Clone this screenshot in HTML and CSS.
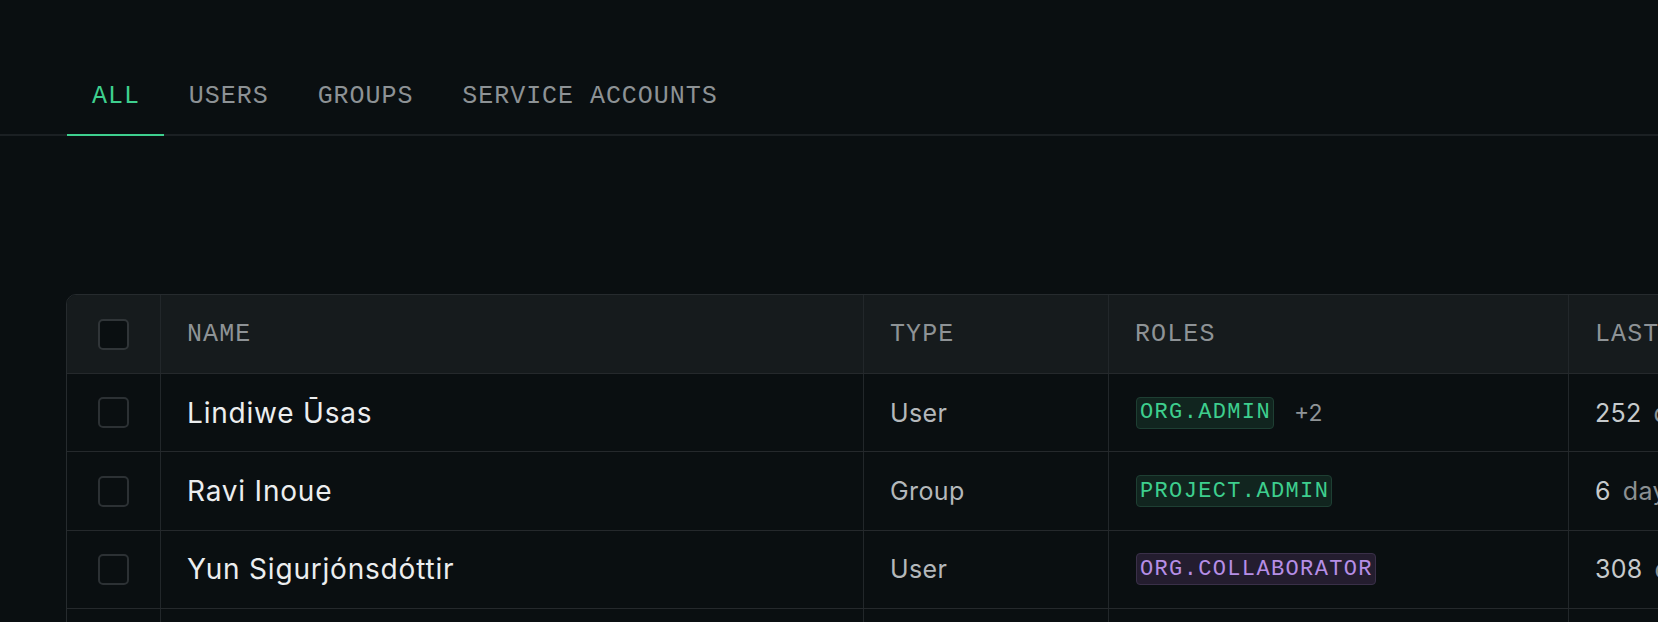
FILE: index.html
```html
<!DOCTYPE html>
<html lang="en">
<head>
<meta charset="utf-8">
<title>Members</title>
<link rel="stylesheet" href="styles.css">
</head>
<body>
<main class="page">
  <nav class="tabs">
    <a class="tab tab--active" href="#">ALL</a>
    <a class="tab" href="#">USERS</a>
    <a class="tab" href="#">GROUPS</a>
    <a class="tab" href="#">SERVICE ACCOUNTS</a>
  </nav>

  <section class="table">
    <div class="row row--head">
      <div class="cell cell--check"><span class="checkbox checkbox--head"></span></div>
      <div class="cell label">NAME</div>
      <div class="cell label">TYPE</div>
      <div class="cell label">ROLES</div>
      <div class="cell label">LAST ACTIVE</div>
    </div>

    <div class="row">
      <div class="cell cell--check"><span class="checkbox"></span></div>
      <div class="cell name">Lindiwe Ūsas</div>
      <div class="cell type">User</div>
      <div class="cell roles"><span class="badge badge--green">ORG.ADMIN</span><span class="more">+2</span></div>
      <div class="cell when"><span class="num">252</span><span class="unit">days ago</span></div>
    </div>

    <div class="row">
      <div class="cell cell--check"><span class="checkbox"></span></div>
      <div class="cell name">Ravi Inoue</div>
      <div class="cell type">Group</div>
      <div class="cell roles"><span class="badge badge--green">PROJECT.ADMIN</span></div>
      <div class="cell when"><span class="num">6</span><span class="unit">days ago</span></div>
    </div>

    <div class="row">
      <div class="cell cell--check"><span class="checkbox"></span></div>
      <div class="cell name">Yun Sigurjónsdóttir</div>
      <div class="cell type">User</div>
      <div class="cell roles"><span class="badge badge--purple">ORG.COLLABORATOR</span></div>
      <div class="cell when"><span class="num">308</span><span class="unit">days ago</span></div>
    </div>

    <div class="row">
      <div class="cell cell--check"><span class="checkbox"></span></div>
      <div class="cell name">Mateo Albrecht</div>
      <div class="cell type">Service account</div>
      <div class="cell roles"><span class="badge badge--green">ORG.VIEWER</span></div>
      <div class="cell when"><span class="num">2</span><span class="unit">days ago</span></div>
    </div>
  </section>
</main>
</body>
</html>
```

FILE: styles.css
```css
html, body {
  margin: 0;
  padding: 0;
  background: #0a0f11;
  overflow: hidden;
}

.page {
  width: 1658px;
  height: 622px;
  overflow: hidden;
  font-family: Inter, "Noto Sans", sans-serif;
  color: #e6e8e9;
}

/* Tab strip */
.tabs {
  display: flex;
  height: 80px;
  margin-top: 56px;
  padding-left: 67px;
  box-shadow: inset 0 -2px 0 #1b2023;
}

.tab {
  display: flex;
  align-items: center;
  padding: 3px 24px 0 25px;
  border-bottom: 2px solid transparent;
  font-family: "Liberation Mono", monospace;
  font-size: 25px;
  letter-spacing: 0.95px;
  color: #8d9295;
  text-decoration: none;
}

.tab--active {
  color: #3ecf8e;
  border-bottom-color: #3ecf8e;
}

/* Members table */
.table {
  width: 1800px;
  margin: 158px 0 0 66px;
  border: 1px solid #262b2e;
  border-radius: 10px 0 0 0;
  overflow: hidden;
}

.row {
  display: grid;
  grid-template-columns: 94px 703px 245px 460px 1fr;
  height: 78.4px;
  border-bottom: 1px solid #25292c;
  box-sizing: border-box;
}

.row--head {
  height: 79px;
  background: #161b1d;
}

.cell {
  display: flex;
  align-items: center;
  padding-left: 26px;
  border-right: 1px solid #22272a;
  min-width: 0;
  white-space: nowrap;
}

.cell--check {
  justify-content: center;
  padding-left: 0;
}

.checkbox {
  width: 31px;
  height: 31px;
  box-sizing: border-box;
  border: 2px solid #2c3134;
  border-radius: 5px;
}

.checkbox--head {
  background: #0a0f11;
  border-color: #303538;
}

.label {
  font-family: "Liberation Mono", monospace;
  font-size: 25px;
  letter-spacing: 1.1px;
  color: #8e9396;
}

.name {
  font-size: 28px;
  letter-spacing: 0.8px;
  color: #eceeef;
}

.type {
  font-size: 25px;
  letter-spacing: 0.4px;
  color: #b4b8bb;
}

.roles {
  padding-left: 27px;
  gap: 20px;
}

.badge {
  display: inline-flex;
  align-items: center;
  height: 32px;
  box-sizing: border-box;
  padding: 0 2px 0 3px;
  border: 1px solid;
  border-radius: 4px;
  font-family: "Liberation Mono", monospace;
  font-size: 22px;
  letter-spacing: 1.35px;
}

.badge--green {
  color: #3ecf8e;
  background: #11251f;
  border-color: #1e3f33;
}

.badge--purple {
  color: #b68ee6;
  background: #241d2f;
  border-color: #3a3049;
}

.more {
  font-size: 23px;
  color: #8f9497;
}

.when {
  font-size: 25px;
  letter-spacing: 0.3px;
  gap: 12px;
}

.num {
  color: #c6cacc;
}

.unit {
  color: #8b9093;
}
```
